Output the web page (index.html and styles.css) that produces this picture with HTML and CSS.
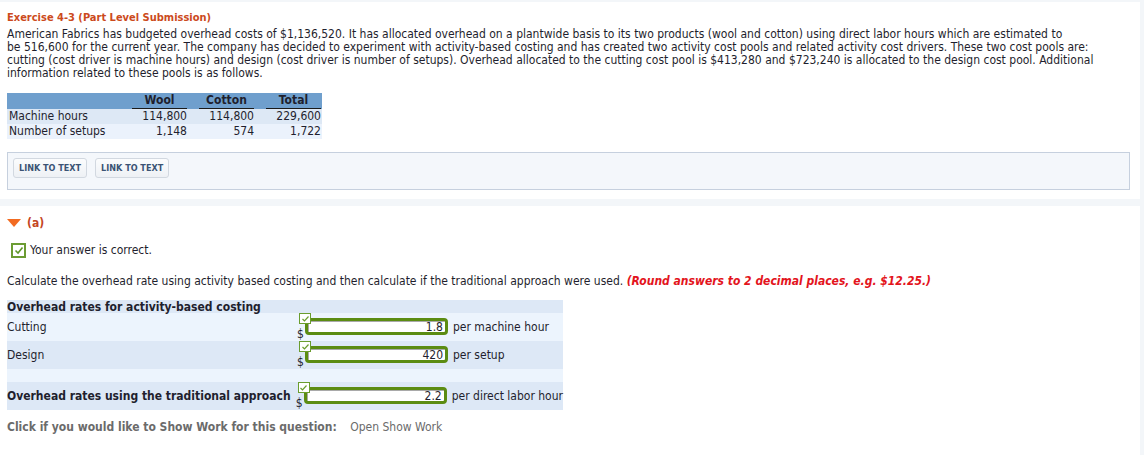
FILE: index.html
```html
<!DOCTYPE html>
<html>
<head>
    <meta charset="UTF-8" name="viewport" content="width=device-width, initial-scale=1.0"/>
    <title>Exercise 4-3</title>
    <link rel="stylesheet" href="styles.css">
</head>
<body>
    <div class="page">
        <div class="panel question">
            <h1 class="title">Exercise 4-3 (Part Level Submission)</h1>
            <p class="intro">American Fabrics has budgeted overhead costs of $1,136,520. It has allocated overhead on a plantwide basis to its two products (wool and cotton) using direct labor hours which are estimated to<br>be 516,600 for the current year. The company has decided to experiment with activity-based costing and has created two activity cost pools and related activity cost drivers. These two cost pools are: cutting (cost driver is machine hours) and design (cost driver is number of setups). Overhead allocated to the cutting cost pool is $413,280 and $723,240 is allocated to the design cost pool. Additional information related to these pools is as follows.</p>

            <div class="data">
                <div class="data-row head">
                    <span></span>
                    <span class="col-head">Wool</span>
                    <span class="col-head">Cotton</span>
                    <span class="col-head">Total</span>
                </div>
                <div class="data-row odd">
                    <span>Machine hours</span>
                    <span class="num">114,800</span>
                    <span class="num">114,800</span>
                    <span class="num">229,600</span>
                </div>
                <div class="data-row even">
                    <span>Number of setups</span>
                    <span class="num">1,148</span>
                    <span class="num">574</span>
                    <span class="num">1,722</span>
                </div>
            </div>

            <div class="links">
                <a class="link-btn" href="#">Link to Text</a>
                <a class="link-btn" href="#">Link to Text</a>
            </div>
        </div>

        <div class="panel part">
            <div class="part-head">
                <svg class="arrow" width="14" height="8" viewBox="0 0 14 8"><path d="M0 0 H14 L7 8 Z" fill="#f26b21"/></svg>
                <span>(a)</span>
            </div>

            <div class="correct">
                <span class="big-check">
                    <svg width="10" height="9" viewBox="0 0 10 9"><path d="M1.5 4.5 L4 7 L8.5 1.5" fill="none" stroke="#5f9628" stroke-width="1.6"/></svg>
                </span>
                Your answer is correct.
            </div>

            <p class="instr">Calculate the overhead rate using activity based costing and then calculate if the traditional approach were used. <em>(Round answers to 2 decimal places, e.g. $12.25.)</em></p>

            <div class="answers">
                <div class="ans-row dark heading">Overhead rates for activity-based costing</div>

                <div class="ans-row light">
                    <span class="label">Cutting</span>
                    <span class="field">
                        <span class="tick"><svg width="9" height="8" viewBox="0 0 9 8"><path d="M1.5 4 L3.5 6 L7.5 1.5" fill="none" stroke="#6a9d2e" stroke-width="1.2"/></svg></span>
                        <span class="dollar">$</span>
                        <input class="amount" type="text" value="1.8" readonly>
                    </span>
                    <span class="unit">per machine hour</span>
                </div>

                <div class="ans-row dark">
                    <span class="label">Design</span>
                    <span class="field">
                        <span class="tick"><svg width="9" height="8" viewBox="0 0 9 8"><path d="M1.5 4 L3.5 6 L7.5 1.5" fill="none" stroke="#6a9d2e" stroke-width="1.2"/></svg></span>
                        <span class="dollar">$</span>
                        <input class="amount" type="text" value="420" readonly>
                    </span>
                    <span class="unit">per setup</span>
                </div>

                <div class="ans-row light spacer"></div>

                <div class="ans-row dark">
                    <span class="label strong">Overhead rates using the traditional approach</span>
                    <span class="field">
                        <span class="tick"><svg width="9" height="8" viewBox="0 0 9 8"><path d="M1.5 4 L3.5 6 L7.5 1.5" fill="none" stroke="#6a9d2e" stroke-width="1.2"/></svg></span>
                        <span class="dollar">$</span>
                        <input class="amount" type="text" value="2.2" readonly>
                    </span>
                    <span class="unit">per direct labor hour</span>
                </div>
            </div>

            <p class="show-work"><b>Click if you would like to Show Work for this question:</b> <a href="#">Open Show Work</a></p>
        </div>
    </div>
</body>
</html>
```

FILE: styles.css
```css
body {
    margin: 0;
    background: #f3f6f9;
    font-family: "DejaVu Sans Condensed", "DejaVu Sans", sans-serif;
    font-size: 12px;
    color: #1f1f2e;
}
.page {
    padding: 2px 4px 0 0;
}
.panel {
    background: #fff;
}
.question {
    padding: 9px 10px 9px 7px;
}
.part {
    margin-top: 7px;
    padding: 10px 10px 30px 7px;
}
.title {
    margin: 0;
    font-size: 11px;
    line-height: 14px;
    color: #cc4a1c;
}
.intro {
    margin: 3px 12px 0 0;
    line-height: 13px;
}

/* activity data table */
.data {
    width: 315px;
    margin-top: 13px;
}
.data-row {
    display: grid;
    grid-template-columns: 113px 55px 55px 55px;
    column-gap: 12px;
    line-height: 15px;
}
.data-row.head {
    background: #6f9fcd;
    font-weight: bold;
    font-size: 12px;
}
.col-head {
    text-align: center;
    border-bottom: 1px solid #1a1a1a;
}
.data-row.odd { background: #dde8f5; }
.data-row.even { background: #ebf2fc; }
.data-row span:first-child { padding-left: 2px; }
.num { text-align: right; }

.links {
    margin-top: 13px;
    padding: 5px 5px 11px;
    background: #f4f7fb;
    border: 1px solid #c6d0de;
    display: flex;
    gap: 8px;
}
.link-btn {
    display: inline-block;
    padding: 0 5px;
    height: 18px;
    line-height: 18px;
    border: 1px solid #d2d8e0;
    border-radius: 3px;
    background: linear-gradient(#fbfcfd, #eef1f5);
    color: #3b5374;
    font-size: 9px;
    font-weight: bold;
    text-transform: uppercase;
    text-decoration: none;
}

/* part (a) */
.part-head {
    display: flex;
    align-items: center;
    gap: 6px;
    line-height: 14px;
    font-size: 12px;
    font-weight: bold;
    color: #c4461f;
}
.correct {
    margin: 13px 0 0 4px;
    display: flex;
    align-items: center;
    gap: 4px;
    line-height: 15px;
}
.big-check {
    width: 11px;
    height: 11px;
    border: 2px solid #6c9c33;
    display: flex;
    align-items: center;
    justify-content: center;
}
.instr {
    margin: 17px 0 0;
    line-height: 13px;
}
.instr em {
    color: #e3141c;
    font-weight: bold;
}

/* answer table */
.answers {
    width: 556px;
    margin-top: 12px;
}
.ans-row {
    display: flex;
    align-items: center;
    height: 28px;
}
.ans-row.dark { background: #dde8f6; }
.ans-row.light { background: #ecf4fd; }
.ans-row.heading {
    height: 13px;
    font-weight: bold;
}
.ans-row.spacer { height: 13px; }
.label {
    width: 290px;
}
.label.strong {
    font-weight: bold;
}
.field {
    position: relative;
    align-self: stretch;
    display: flex;
    align-items: flex-end;
    width: 151px;
}
.tick {
    position: absolute;
    top: 0;
    left: 2px;
    width: 10px;
    height: 9px;
    background: #fff;
    border: 1px solid #6a9d2e;
    display: flex;
    align-items: center;
    justify-content: center;
    z-index: 1;
}
.dollar {
    width: 8px;
    line-height: 13px;
}
.amount {
    box-sizing: border-box;
    width: 143px;
    height: 17px;
    margin: 0 0 6px;
    padding: 0 2px 0 0;
    border: 3px solid #5b8c12;
    border-radius: 4px;
    box-shadow: inset 1px 1px 0 #a9a9a9;
    background: #fff;
    font-family: inherit;
    font-size: 12px;
    color: #1f1f2e;
    text-align: right;
}
.unit {
    margin-left: 5px;
    white-space: nowrap;
}
.show-work {
    margin: 10px 0 0;
    line-height: 14px;
    color: #6b6b6b;
}
.show-work a {
    margin-left: 10px;
    color: #6b6b6b;
    text-decoration: none;
}
```
